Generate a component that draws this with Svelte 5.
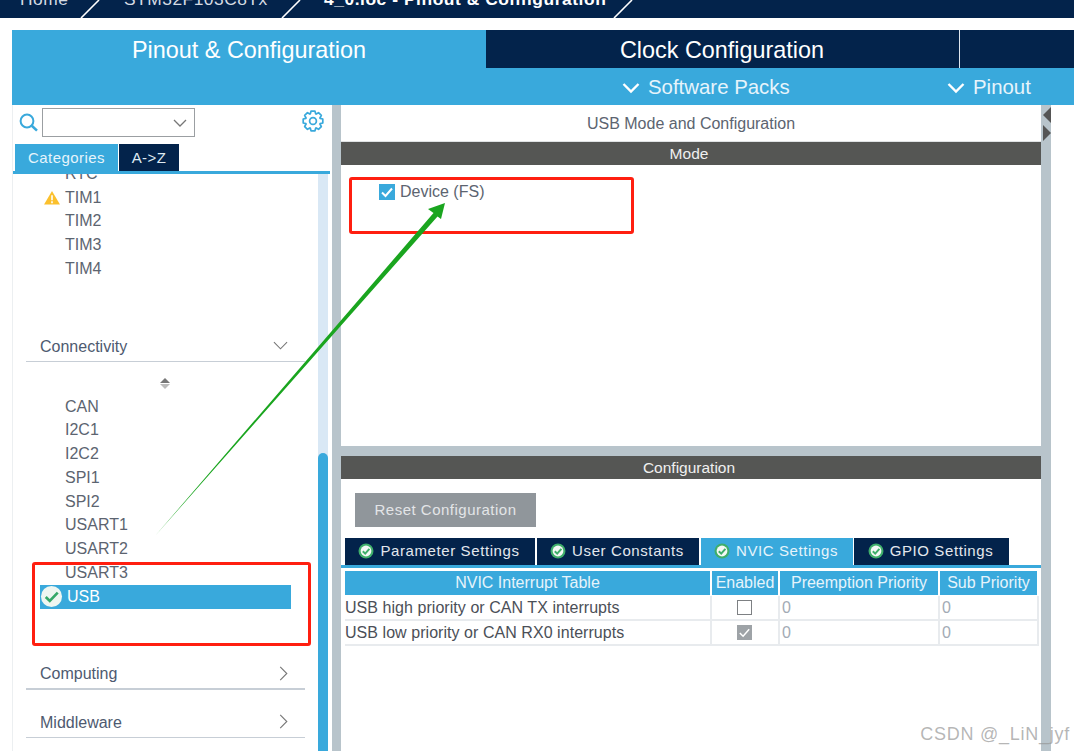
<script>
  const breadcrumbs = [
    { label: 'Home', width: 81, inset: 0 },
    { label: 'STM32F103C8Tx', width: 201, inset: 23 },
    { label: '4_0.ioc - Pinout & Configuration', width: 332, inset: 22, active: true }
  ];
  const timers = ['TIM2', 'TIM3', 'TIM4'];
  const connectivity = ['CAN', 'I2C1', 'I2C2', 'SPI1', 'SPI2', 'USART1', 'USART2', 'USART3'];
  const configTabs = [
    { label: 'Parameter Settings', width: 190 },
    { label: 'User Constants', width: 162 },
    { label: 'NVIC Settings', width: 152, active: true },
    { label: 'GPIO Settings', width: 155 }
  ];
  const interrupts = [
    { name: 'USB high priority or CAN TX interrupts', enabled: false },
    { name: 'USB low priority or CAN RX0 interrupts', enabled: true }
  ];

  // eight tooth cog outline for the settings button
  function cogPath(cx, cy, outer, inner) {
    const pts = [];
    for (let i = 0; i < 8; i++) {
      const a = (i * Math.PI) / 4;
      for (const [off, r] of [[-0.36, inner], [-0.2, outer], [0.2, outer], [0.36, inner]]) {
        pts.push(`${(cx + r * Math.sin(a + off)).toFixed(2)} ${(cy - r * Math.cos(a + off)).toFixed(2)}`);
      }
    }
    return 'M' + pts.join('L') + 'Z';
  }
  const cog = cogPath(11, 11, 10, 7.6);
</script>

{#snippet okIcon()}
  <svg class="ok" viewBox="0 0 16 16" width="16" height="16">
    <circle cx="8" cy="8" r="7.5" fill="#3fae6a" />
    <circle cx="8" cy="8" r="5.4" fill="#f4f8f5" />
    <path d="M4.8 8.2 7.2 10.6 11.4 5.8" fill="none" stroke="#3fae6a" stroke-width="2" />
  </svg>
{/snippet}

{#snippet chevron()}
  <svg class="chev" viewBox="0 0 18 12" width="18" height="12">
    <path d="M1.5 2 9 9.5 16.5 2" fill="none" stroke="#fff" stroke-width="2.4" />
  </svg>
{/snippet}

<div class="page">
  <nav class="crumbs">
    {#each breadcrumbs as crumb}
      <div class="crumb" class:active={crumb.active} style="width: {crumb.width}px; padding-left: {crumb.inset}px">
        <span>{crumb.label}</span>
        <svg viewBox="0 0 24 18" width="24" height="18"><path d="M4 18 22 0" stroke="#fff" stroke-width="1.6" /></svg>
      </div>
    {/each}
  </nav>

  <div class="shell">
    <div class="main-tabs">
      <div class="main-tab first">Pinout &amp; Configuration</div>
      <div class="main-tab second">Clock Configuration</div>
      <div class="main-tab third"></div>
    </div>
    <div class="sub-bar">
      <div class="sub-item packs">{@render chevron()}<span>Software Packs</span></div>
      <div class="sub-item">{@render chevron()}<span>Pinout</span></div>
    </div>

    <div class="workspace">
      <aside class="left">
        <div class="search-row">
          <svg class="search" viewBox="0 0 20 20" width="20" height="20">
            <circle cx="8" cy="8" r="6.4" fill="none" stroke="#39a9dc" stroke-width="2" />
            <path d="M12.8 12.8 18 17.6" stroke="#39a9dc" stroke-width="2.6" />
          </svg>
          <div class="combo">
            <svg viewBox="0 0 14 8" width="14" height="8"><path d="M1 1 7 7 13 1" fill="none" stroke="#777" stroke-width="1.3" /></svg>
          </div>
          <svg class="gear" viewBox="0 0 22 22" width="22" height="22">
            <path d={cog} fill="none" stroke="#39a9dc" stroke-width="1.7" stroke-linejoin="round" />
            <circle cx="11" cy="11" r="3.4" fill="none" stroke="#39a9dc" stroke-width="1.7" />
          </svg>
        </div>
        <div class="side-tabs">
          <div class="side-tab on">Categories</div>
          <div class="side-tab">A-&gt;Z</div>
        </div>
        <div class="side-body">
          <div class="tree">
            <div class="item rtc">RTC</div>
            <div class="item warn">
              <svg viewBox="0 0 18 16" width="18" height="15"><path d="M9 1 17.5 15.5H.5Z" fill="#fbc02d" /><path d="M9 5.5v5.5M9 12v2" stroke="#fff" stroke-width="1.7" /></svg>
              TIM1
            </div>
            {#each timers as t}<div class="item">{t}</div>{/each}

            <div class="group open">
              <span>Connectivity</span>
              <svg viewBox="0 0 16 9" width="15" height="9"><path d="M1 1 8 8 15 1" fill="none" stroke="#777" stroke-width="1.2" /></svg>
            </div>
            <div class="sorter"><i class="up"></i><i class="down"></i></div>
            {#each connectivity as c}<div class="item">{c}</div>{/each}
            <div class="item selected">
              <svg viewBox="0 0 24 24" width="23" height="23">
                <circle cx="12" cy="12" r="11" fill="#eef6f1" />
                <path d="M6 12.5 10.2 16.6 18.5 8" fill="none" stroke="#35a868" stroke-width="2.8" />
              </svg>
              USB
            </div>

            <div class="group computing">
              <span>Computing</span>
              <svg viewBox="0 0 9 16" width="9" height="15"><path d="M1 1 8 8 1 15" fill="none" stroke="#777" stroke-width="1.2" /></svg>
            </div>
            <div class="group middleware">
              <span>Middleware</span>
              <svg viewBox="0 0 9 16" width="9" height="15"><path d="M1 1 8 8 1 15" fill="none" stroke="#777" stroke-width="1.2" /></svg>
            </div>
          </div>
          <div class="scroll"><div class="thumb"></div></div>
        </div>
      </aside>

      <div class="split"></div>

      <section class="right">
        <div class="title">USB Mode and Configuration</div>
        <div class="bar">Mode</div>
        <div class="mode-pane">
          <label class="device">
            <span class="check">
              <svg viewBox="0 0 16 16" width="16" height="16"><path d="M3 8.5 6.5 12 13 4.5" fill="none" stroke="#fff" stroke-width="2" /></svg>
            </span>
            Device (FS)
          </label>
        </div>
        <div class="band"></div>
        <div class="bar">Configuration</div>
        <div class="config-pane">
          <button class="reset">Reset Configuration</button>
          <div class="cfg-tabs">
            {#each configTabs as tab}
              <div class="cfg-tab" class:active={tab.active} style="width: {tab.width}px">
                {@render okIcon()}{tab.label}
              </div>
            {/each}
          </div>
          <div class="table">
            <div class="th">NVIC Interrupt Table</div>
            <div class="th">Enabled</div>
            <div class="th">Preemption Priority</div>
            <div class="th">Sub Priority</div>
            {#each interrupts as row}
              <div class="td">{row.name}</div>
              <div class="td mid">
                {#if row.enabled}
                  <span class="box on"><svg viewBox="0 0 16 16" width="15" height="15"><path d="M3 8.5 6.5 12 13 4.5" fill="none" stroke="#fff" stroke-width="1.6" /></svg></span>
                {:else}
                  <span class="box"></span>
                {/if}
              </div>
              <div class="td zero">0</div>
              <div class="td zero">0</div>
            {/each}
          </div>
        </div>
      </section>

      <div class="split arrows"><i class="tri-l"></i><i class="tri-r"></i></div>
    </div>
  </div>

  <!-- annotations drawn on top of the screenshot -->
  <div class="mark mark-device"></div>
  <div class="mark mark-usb"></div>
  <svg class="arrow" viewBox="0 0 1074 751" width="1074" height="751">
    <polygon points="155,536 433.5,213 428,209 445,203 441,219 437.5,216.5" fill="#1aa51f" />
  </svg>
  <div class="watermark">CSDN @_LiN_jyf</div>
</div>

<style>
  :global(body) {
    margin: 0;
    background: #fff;
  }

  .page {
    position: relative;
    width: 1074px;
    height: 751px;
    overflow: hidden;
    font-family: "Liberation Sans", Arial, sans-serif;
    color: #5c6470;
    background: #fff;
  }

  .crumbs {
    display: flex;
    height: 18px;
    padding-left: 20px;
    background: #03234b;
    overflow: hidden;
  }
  .crumb {
    position: relative;
    display: flex;
    flex: none;
    box-sizing: border-box;
    align-items: flex-end;
    color: #d5dbe3;
    font-size: 17.4px;
    line-height: 18px;
    letter-spacing: 0.5px;
  }
  .crumb span {
    position: relative;
    top: -10px;
    white-space: nowrap;
  }
  .crumb svg {
    position: absolute;
    right: 0;
    top: 0;
  }
  .crumb.active {
    color: #fff;
    font-weight: bold;
    letter-spacing: 0.55px;
  }

  .shell {
    margin: 12px 0 0 12px;
  }
  .main-tabs {
    display: flex;
    height: 38px;
    color: #fff;
    font-size: 23.4px;
    line-height: 40px;
    text-align: center;
    background: #03234b;
  }
  .main-tab.first {
    width: 474px;
    background: #39a9dc;
  }
  .main-tab.second {
    width: 473px;
    margin-left: 1px;
    padding-right: 2px;
    box-sizing: border-box;
    border-right: 1px solid #dfe6ee;
  }
  .sub-bar {
    display: flex;
    height: 37px;
    padding: 2px 0 0 610px;
    box-sizing: border-box;
    align-items: center;
    color: #e6f4fb;
    font-size: 20.4px;
    background: #39a9dc;
  }
  .sub-item {
    display: flex;
    align-items: center;
    gap: 8px;
  }
  .sub-item.packs {
    width: 325px;
  }

  .workspace {
    display: grid;
    grid-template-columns: 320px 9px 700px 10px;
    height: 646px;
  }
  .left {
    display: flex;
    flex-direction: column;
    min-height: 0;
    border-left: 1px solid #eceff1;
  }
  .split {
    background: #b8c4cb;
  }
  .split.arrows {
    display: flex;
    flex-direction: column;
    padding-top: 2px;
  }
  .tri-l, .tri-r {
    width: 0;
    height: 0;
    border-top: 8.5px solid transparent;
    border-bottom: 8.5px solid transparent;
  }
  .tri-l {
    margin-left: 2px;
    border-right: 8px solid #555;
  }
  .tri-r {
    margin: 2px 0 0 2px;
    border-left: 8px solid #555;
  }

  .search-row {
    display: flex;
    height: 39px;
    padding: 3px 0 0 6px;
    box-sizing: border-box;
    align-items: flex-start;
  }
  .search {
    margin: 5px 3px 0 0;
  }
  .combo {
    display: flex;
    width: 153px;
    height: 29px;
    box-sizing: border-box;
    border: 1px solid #9b9fa2;
    padding-right: 7px;
    align-items: center;
    justify-content: flex-end;
  }
  .gear {
    margin: 2px 0 0 107px;
  }
  .side-tabs {
    display: flex;
    height: 27px;
    margin-left: 2px;
    font-size: 15px;
    letter-spacing: 0.45px;
    line-height: 28px;
    color: #dfeaf2;
  }
  .side-tab {
    width: 60px;
    text-align: center;
    background: #03234b;
  }
  .side-tab.on {
    width: 103px;
    margin-right: 1px;
    background: #39a9dc;
    color: #e6f4fb;
  }
  .side-body {
    display: flex;
    flex: 1;
    min-height: 0;
    border-top: 3px solid #39a9dc;
    margin-right: 2px;
    overflow: hidden;
  }
  .tree {
    flex: 1;
    padding-left: 13px;
    padding-right: 13px;
    margin-top: -12px;
    font-size: 16px;
  }
  .item {
    display: flex;
    height: 23.75px;
    padding-left: 39px;
    align-items: center;
  }
  .item.warn {
    position: relative;
  }
  .warn svg {
    position: absolute;
    left: 17px;
    top: 4px;
  }
  .item.selected {
    margin-left: 14px;
    margin-right: 14px;
    padding-left: 27px;
    position: relative;
    color: #fff;
    background: #39a9dc;
  }
  .selected svg {
    position: absolute;
    left: 0;
    top: 0;
  }
  .group {
    display: flex;
    justify-content: space-between;
    align-items: center;
    height: 30px;
    padding: 0 17px 0 14px;
    border-bottom: 1px solid #c7ced6;
    color: #4e5a70;
  }
  .group.open {
    margin-top: 50px;
  }
  .group.computing {
    margin-top: 50px;
    height: 29px;
    border-bottom-width: 2px;
  }
  .group.middleware {
    margin-top: 17px;
  }
  .group span {
    position: relative;
    top: 1px;
  }
  .sorter {
    display: flex;
    flex-direction: column;
    align-items: center;
    gap: 1px;
    height: 33px;
    padding: 16px 1px 0 0;
    box-sizing: border-box;
  }
  .up, .down {
    width: 0;
    height: 0;
    border-left: 5px solid transparent;
    border-right: 5px solid transparent;
  }
  .up {
    border-bottom: 5px solid #777;
  }
  .down {
    border-top: 5px solid #bbb;
  }
  .scroll {
    flex: none;
    width: 10px;
    margin-right: 2px;
    background: #d9e8f5;
  }
  .thumb {
    height: 400px;
    margin-top: 279px;
    border-radius: 5px 5px 0 0;
    background: #39a9dc;
  }

  .right {
    display: flex;
    flex-direction: column;
    min-height: 0;
  }
  .title {
    height: 36px;
    line-height: 38px;
    text-align: center;
    font-size: 16px;
    border-bottom: 1px solid #dfe2e4;
  }
  .bar {
    height: 23px;
    padding-right: 4px;
    line-height: 23px;
    text-align: center;
    font-size: 15.5px;
    color: #f0f0f0;
    background: #555654;
  }
  .mode-pane {
    height: 281px;
  }
  .device {
    display: flex;
    align-items: center;
    gap: 5px;
    padding: 18px 0 0 38px;
    font-size: 16px;
    line-height: 18px;
  }
  .check {
    display: block;
    width: 16px;
    height: 16px;
    background: #39a9dc;
  }
  .check svg {
    display: block;
  }
  .band {
    height: 10px;
    background: #b8c4cb;
  }
  .config-pane {
    flex: 1;
    padding-top: 14px;
  }
  .reset {
    display: block;
    width: 181px;
    height: 34px;
    margin-left: 14px;
    border: 0;
    padding: 0 0 2px;
    font: 15px "Liberation Sans", Arial, sans-serif;
    letter-spacing: 0.5px;
    color: #e3e5e7;
    background: #90969b;
  }
  .cfg-tabs {
    display: flex;
    height: 27px;
    margin-top: 11px;
    padding-left: 4px;
    gap: 2px;
    border-bottom: 3px solid #39a9dc;
  }
  .cfg-tab {
    display: flex;
    flex: none;
    gap: 6px;
    align-items: center;
    justify-content: center;
    box-sizing: border-box;
    padding: 0 2px 2px 0;
    font-size: 15px;
    letter-spacing: 0.6px;
    color: #e3e8ee;
    background: #03234b;
  }
  .cfg-tab.active {
    color: #e6f4fb;
    background: #39a9dc;
  }
  .cfg-tab:last-child {
    margin-left: -1px;
  }
  .ok {
    flex: none;
  }
  .table {
    display: grid;
    grid-template-columns: 367px 68px 160px 99px;
    margin: 3px 0 0 4px;
    font-size: 16px;
  }
  .th {
    height: 24px;
    margin: 0 2px 1px 0;
    line-height: 24px;
    text-align: center;
    white-space: nowrap;
    color: #e6f4fb;
    background: #39a9dc;
  }
  .td {
    display: flex;
    align-items: center;
    height: 25px;
    box-sizing: border-box;
    border-bottom: 2px solid #e8ebee;
    border-right: 2px solid #e8ebee;
    color: #4b4f57;
    letter-spacing: 0.05px;
    white-space: nowrap;
  }
  .td.mid {
    justify-content: center;
    padding-right: 2px;
  }
  .td.zero {
    padding-left: 2px;
    color: #a3abb5;
  }
  .box {
    display: block;
    width: 15px;
    height: 15px;
    box-sizing: border-box;
    border: 1.5px solid #7d8083;
  }
  .box.on {
    border: 0;
    background: #9ea3a7;
  }
  .box svg {
    display: block;
  }

  .mark {
    position: absolute;
    box-sizing: border-box;
    border: 3px solid #ff1f10;
    border-radius: 3px;
  }
  .mark-device {
    left: 349px;
    top: 177px;
    width: 285px;
    height: 57px;
  }
  .mark-usb {
    left: 32px;
    top: 562px;
    width: 279px;
    height: 84px;
  }
  .arrow {
    position: absolute;
    left: 0;
    top: 0;
    pointer-events: none;
  }
  .watermark {
    position: absolute;
    right: 4px;
    top: 724px;
    font-size: 18px;
    letter-spacing: 0.75px;
    color: rgba(150, 150, 150, 0.7);
  }
</style>
